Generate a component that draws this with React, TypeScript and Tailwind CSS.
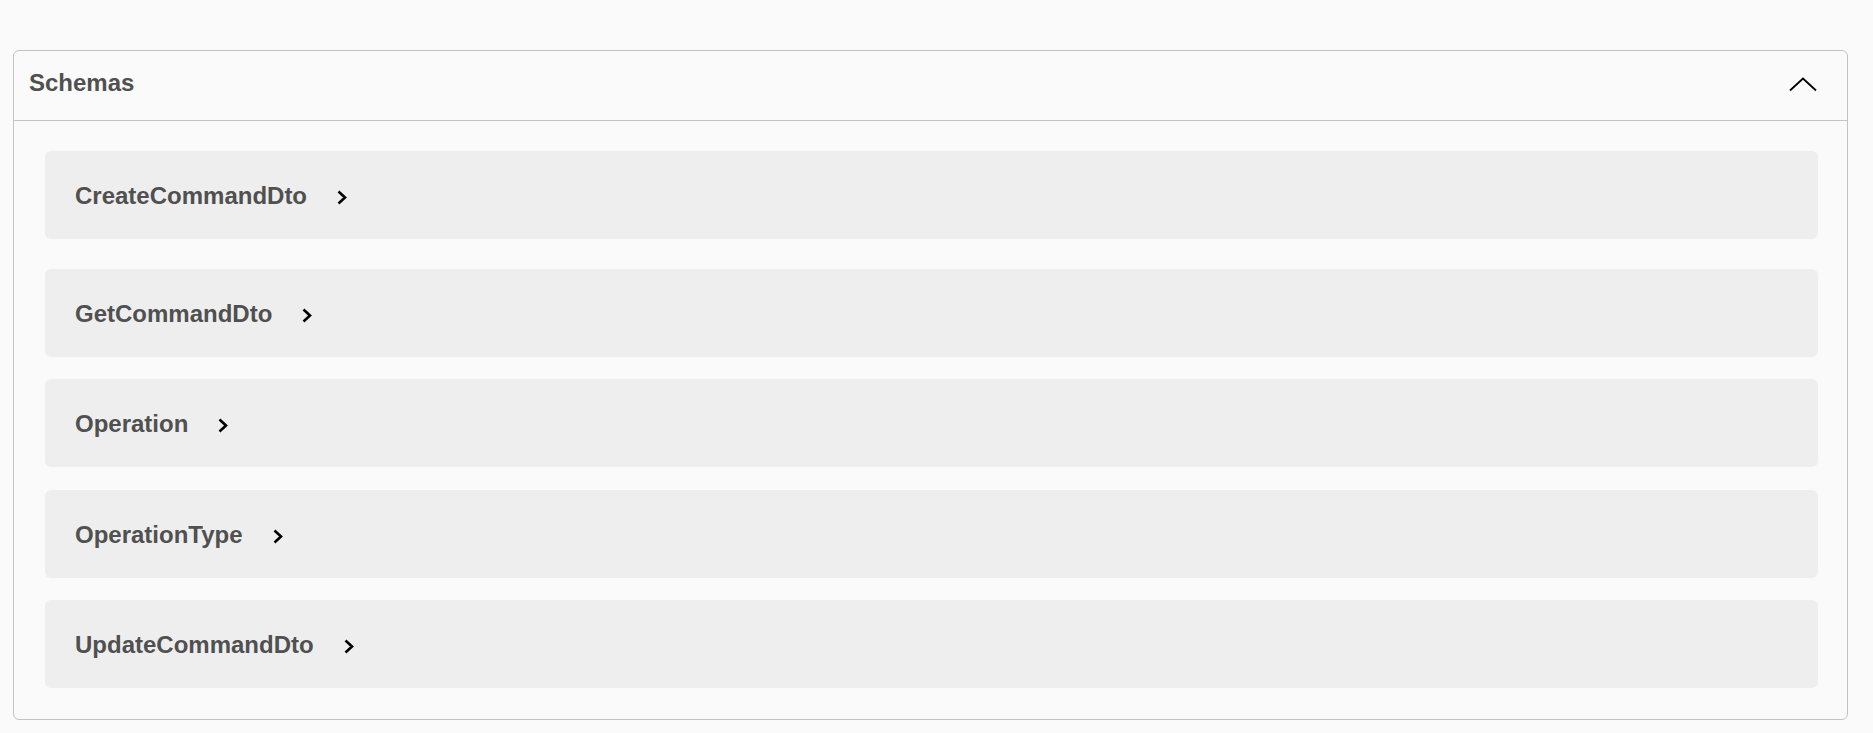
import React from "react";

const SCHEMAS = [
  "CreateCommandDto",
  "GetCommandDto",
  "Operation",
  "OperationType",
  "UpdateCommandDto",
];

function ChevronRight() {
  return (
    <svg width="10" height="15" viewBox="0 0 10 15" fill="none" className="ml-[30px] mt-[3px]">
      <polyline points="1.5,1.5 8,7.5 1.5,13.5" stroke="#000" strokeWidth="2.6" />
    </svg>
  );
}

function ChevronUp() {
  return (
    <svg width="28" height="15" viewBox="0 0 28 15" fill="none" className="mt-[26px]">
      <polyline points="1,13.5 14,1.5 27,13.5" stroke="#000" strokeWidth="1.8" />
    </svg>
  );
}

function SchemaRow({ name, index }: { name: string; index: number }) {
  // first row has extra space below it, rows 4+ are nudged by a pixel
  const extra = index === 0 ? "mb-[8px]" : index === 3 ? "mt-[1px]" : "";
  return (
    <div
      className={`flex items-center h-[88px] pl-[30px] pt-[2px] ml-[31px] mr-[29px] rounded-[6px] bg-[#eeeeee] ${extra}`}
    >
      <span className="text-[24px] leading-[24px] font-bold text-[#505050]">{name}</span>
      <ChevronRight />
    </div>
  );
}

export default function App() {
  return (
    <div
      className="w-[1873px] h-[733px] bg-[#fafafa] pt-[50px] pl-[13px]"
      style={{ fontFamily: '"Liberation Sans", Arial, sans-serif' }}
    >
      <section className="w-[1835px] border border-[#c4c4c4] rounded-[6px] bg-[#fafafa]">
        {/* header */}
        <div className="flex justify-between items-start h-[70px] border-b border-[#c4c4c4] pl-[15px] pr-[30px]">
          <h4 className="text-[24px] leading-[24px] font-bold text-[#505050] mt-[20px]">Schemas</h4>
          <ChevronUp />
        </div>

        {/* models */}
        <div className="flex flex-col gap-[22px] pt-[30px] pb-[31px]">
          {SCHEMAS.map((s, i) => (
            <SchemaRow key={s} name={s} index={i} />
          ))}
        </div>
      </section>
    </div>
  );
}
